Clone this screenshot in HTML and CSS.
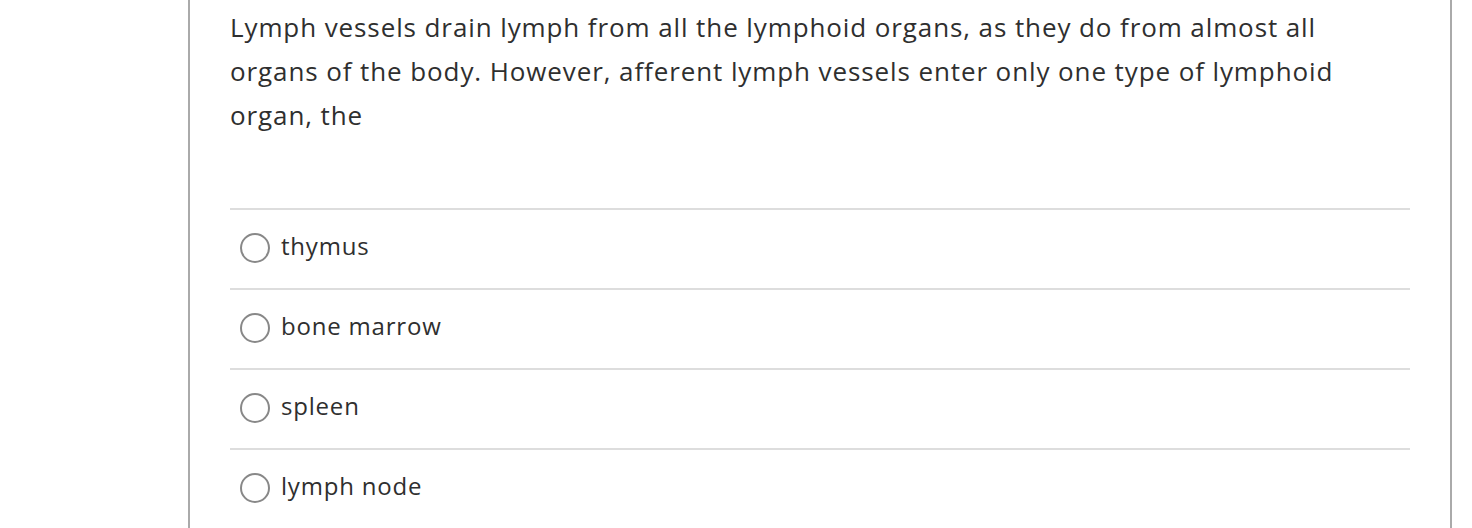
FILE: index.html
```html
<!DOCTYPE html>
<html>
<head>
<meta charset="utf-8">
<link rel="stylesheet" href="styles.css">
</head>
<body>
<div class="page">
  <div class="card">
    <p class="question">Lymph vessels drain lymph from all the lymphoid organs, as they do from almost all organs of the body. However, afferent lymph vessels enter only one type of lymphoid organ, the</p>
    <ul class="choices">
      <li class="choice"><span class="radio"></span><span class="label">thymus</span></li>
      <li class="choice"><span class="radio"></span><span class="label">bone marrow</span></li>
      <li class="choice"><span class="radio"></span><span class="label">spleen</span></li>
      <li class="choice"><span class="radio"></span><span class="label">lymph node</span></li>
    </ul>
  </div>
</div>
</body>
</html>
```
FILE: styles.css
```css
html, body {
  margin: 0;
  padding: 0;
  background: #fff;
}
body {
  font-family: "Open Sans", "Liberation Sans", sans-serif;
  color: #2f2f2f;
  height: 528px;
  overflow: hidden;
}
.page {
  padding-left: 188px;
}
.card {
  box-sizing: border-box;
  width: 1264px;
  border-left: 2px solid #aaa;
  border-right: 2px solid #aaa;
  padding: 5px 40px 40px 40px;
  min-height: 600px;
}
.question {
  margin: 0;
  font-size: 26px;
  letter-spacing: 0.9px;
  line-height: 44px;
  max-width: 1125px;
  padding-bottom: 71px;
}
.choices {
  list-style: none;
  margin: 0;
  padding: 0;
}
.choice {
  border-top: 2px solid #ddd;
  height: 78px;
  box-sizing: content-box;
  display: flex;
  align-items: center;
  padding-left: 10px;
}
.radio {
  flex: none;
  width: 30px;
  height: 30px;
  border: 2.5px solid #888;
  border-radius: 50%;
  box-sizing: border-box;
  margin-right: 11px;
  position: relative;
  top: -1px;
}
.label {
  font-size: 24px;
  letter-spacing: 0.8px;
  line-height: 30px;
  position: relative;
  top: -3px;
}
```
